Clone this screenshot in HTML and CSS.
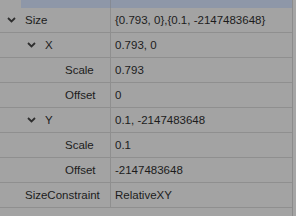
FILE: index.html
```html
<!DOCTYPE html>
<html>
<head>
<meta charset="utf-8">
<link rel="stylesheet" href="styles.css">
</head>
<body>
<div class="panel">
  <div class="table">
    <div class="header">
      <div class="h-lead"></div>
      <div class="h-name"></div>
      <div class="h-val"></div>
    </div>
    <div class="row">
      <div class="name lv0"><span class="chev"><svg width="9" height="6" viewBox="0 0 9 6"><path d="M1 1 L4.5 4.5 L8 1" fill="none" stroke="#2e2e2e" stroke-width="1.8"/></svg></span><span>Size</span></div>
      <div class="val">{0.793, 0},{0.1, -2147483648}</div>
    </div>
    <div class="row">
      <div class="name lv1"><span class="chev"><svg width="9" height="6" viewBox="0 0 9 6"><path d="M1 1 L4.5 4.5 L8 1" fill="none" stroke="#2e2e2e" stroke-width="1.8"/></svg></span><span>X</span></div>
      <div class="val">0.793, 0</div>
    </div>
    <div class="row">
      <div class="name lv2"><span class="chev"></span><span>Scale</span></div>
      <div class="val">0.793</div>
    </div>
    <div class="row">
      <div class="name lv2"><span class="chev"></span><span>Offset</span></div>
      <div class="val">0</div>
    </div>
    <div class="row">
      <div class="name lv1"><span class="chev"><svg width="9" height="6" viewBox="0 0 9 6"><path d="M1 1 L4.5 4.5 L8 1" fill="none" stroke="#2e2e2e" stroke-width="1.8"/></svg></span><span>Y</span></div>
      <div class="val">0.1, -2147483648</div>
    </div>
    <div class="row">
      <div class="name lv2"><span class="chev"></span><span>Scale</span></div>
      <div class="val">0.1</div>
    </div>
    <div class="row">
      <div class="name lv2"><span class="chev"></span><span>Offset</span></div>
      <div class="val">-2147483648</div>
    </div>
    <div class="row">
      <div class="name lv0"><span class="chev"></span><span>SizeConstraint</span></div>
      <div class="val">RelativeXY</div>
    </div>
    <div class="filler"></div>
  </div>
  <div class="strip"></div>
</div>
</body>
</html>
```

FILE: styles.css
```css
html, body {
  margin: 0;
  padding: 0;
  background: #a3a3a3;
}
.panel {
  width: 296px;
  height: 216px;
  display: flex;
  overflow: hidden;
  font-family: "Liberation Sans", Arial, sans-serif;
  font-size: 11.5px;
  color: #1c1c1c;
}
.table {
  width: 292px;
  border-right: 1px solid #8c8c8c;
  display: flex;
  flex-direction: column;
}
.strip {
  flex: 1;
  background: #a5a5a5;
}
.header {
  height: 8px;
  display: flex;
}
.h-lead {
  width: 21px;
  background: #a3a3a3;
}
.h-name {
  width: 89px;
  background: #8e97a8;
  border-right: 1px solid #858a94;
}
.h-val {
  flex: 1;
  background: #8e97a8;
}
.row {
  height: 24px;
  border-bottom: 1px solid #8f8f8f;
  display: flex;
  align-items: stretch;
}
.row:first-of-type {
  border-top: 1px solid #a3a3a3;
}
.name {
  width: 110px;
  border-right: 1px solid #8f8f8f;
  display: flex;
  align-items: center;
  box-sizing: content-box;
}
.lv0 { padding-left: 7px; width: 103px; }
.lv1 { padding-left: 27px; width: 83px; }
.lv2 { padding-left: 47px; width: 63px; }
.chev {
  width: 18px;
  flex: none;
  display: flex;
  align-items: center;
}
.val {
  flex: 1;
  padding-left: 4px;
  display: flex;
  align-items: center;
  white-space: nowrap;
}
.filler {
  flex: 1;
  display: flex;
}
```
